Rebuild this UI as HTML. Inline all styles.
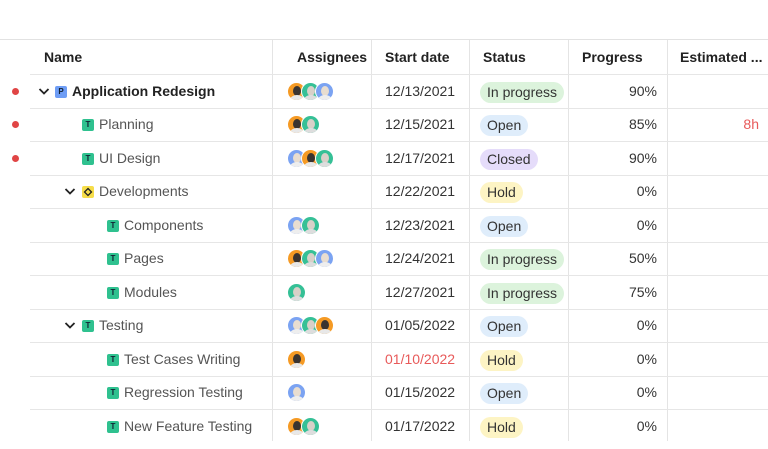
<!DOCTYPE html>
<html><head><meta charset="utf-8"><style>
*{margin:0;padding:0;box-sizing:border-box}
body{width:768px;height:449px;background:#fff;font-family:"Liberation Sans",sans-serif;font-size:14px;color:#333;position:relative;overflow:hidden}
.abs{position:absolute}
.vl{position:absolute;top:40px;height:401px;width:1px;background:#e4e4e4}
.hl{position:absolute;left:30px;right:0;height:1px;background:#e6e6e6}
.hd{position:absolute;top:40px;height:34px;line-height:34px;font-weight:bold;color:#222;font-size:14px}
.row{position:absolute;left:0;width:768px;height:33px}
.txt{position:absolute;top:0;line-height:33px;white-space:nowrap}
.ic{position:absolute;top:11px;width:12px;height:12px;border-radius:2px;font-size:8px;font-weight:bold;color:#123;text-align:center;line-height:12px}
.T{background:#2fc18f}
.P{background:#6e9df5}
.D{background:#f6dd4a}
.chev{position:absolute;top:10px;width:12px;height:12px}
.dot{position:absolute;left:12px;top:13px;width:7px;height:7px;border-radius:50%;background:#e04545}
.av{position:absolute;top:7px;width:19px;height:19px;border-radius:50%;border:1px solid #fff;overflow:hidden}
.av i{position:absolute;left:5px;top:3px;width:8px;height:10px;border-radius:50%}
.av b{position:absolute;left:2px;top:12px;width:14px;height:10px;border-radius:50%}
.o{background:#f59a24}.o i{background:#3a3430}.o b{background:#e8e8e8}
.g{background:#35c096}.g i{background:#d8d0c8}.g b{background:#ddd}
.bl{background:#7ba3f2}.bl i{background:#e8ddd0}.bl b{background:#eee}
.pill{position:absolute;left:480px;top:7px;height:21px;line-height:21px;padding:0 7px;border-radius:11px;font-size:14px;color:#333}
.ip{background:#dcf3dc}.op{background:#dfedfb}.cl{background:#e5dcfa}.ho{background:#fdf4c4}
.date{left:385px}
.pr{right:111px;text-align:right}
</style></head><body>
<div class="abs" style="left:0;right:0;top:39px;height:1px;background:#e2e2e2"></div>
<div class="vl" style="left:272px"></div>
<div class="vl" style="left:371px"></div>
<div class="vl" style="left:469px"></div>
<div class="vl" style="left:568px"></div>
<div class="vl" style="left:667px"></div>
<div class="hd" style="left:44px">Name</div>
<div class="hd" style="left:297px">Assignees</div>
<div class="hd" style="left:385px">Start date</div>
<div class="hd" style="left:483px">Status</div>
<div class="hd" style="left:582px">Progress</div>
<div class="hd" style="left:680px">Estimated ...</div>
<div class="hl" style="top:74px"></div>
<div class="hl" style="top:108px"></div>
<div class="hl" style="top:141px"></div>
<div class="hl" style="top:175px"></div>
<div class="hl" style="top:208px"></div>
<div class="hl" style="top:242px"></div>
<div class="hl" style="top:275px"></div>
<div class="hl" style="top:309px"></div>
<div class="hl" style="top:342px"></div>
<div class="hl" style="top:376px"></div>
<div class="hl" style="top:409px"></div>

<!-- row1 -->
<div class="row" style="top:75px">
<div class="dot"></div>
<svg class="chev" style="left:38px" viewBox="0 0 12 12"><path d="M1.5 4l4.5 4.5 4.5-4.5" fill="none" stroke="#222" stroke-width="1.8"/></svg>
<div class="ic P" style="left:55px">P</div>
<div class="txt" style="left:72px;font-weight:bold;color:#222">Application Redesign</div>
<div class="av o" style="left:287px"><i></i><b></b></div><div class="av g" style="left:301px"><i></i><b></b></div><div class="av bl" style="left:315px"><i></i><b></b></div>
<div class="txt date">12/13/2021</div>
<div class="pill ip">In progress</div>
<div class="txt pr">90%</div>
</div>
<!-- row2 -->
<div class="row" style="top:108px">
<div class="dot"></div>
<div class="ic T" style="left:82px">T</div>
<div class="txt" style="left:99px;color:#555">Planning</div>
<div class="av o" style="left:287px"><i></i><b></b></div><div class="av g" style="left:301px"><i></i><b></b></div>
<div class="txt date">12/15/2021</div>
<div class="pill op">Open</div>
<div class="txt pr">85%</div>
<div class="txt" style="right:9px;color:#e85a5a">8h</div>
</div>
<!-- row3 -->
<div class="row" style="top:142px">
<div class="dot"></div>
<div class="ic T" style="left:82px">T</div>
<div class="txt" style="left:99px;color:#555">UI Design</div>
<div class="av bl" style="left:287px"><i></i><b></b></div><div class="av o" style="left:301px"><i></i><b></b></div><div class="av g" style="left:315px"><i></i><b></b></div>
<div class="txt date">12/17/2021</div>
<div class="pill cl">Closed</div>
<div class="txt pr">90%</div>
</div>
<!-- row4 -->
<div class="row" style="top:175px">
<svg class="chev" style="left:64px" viewBox="0 0 12 12"><path d="M1.5 4l4.5 4.5 4.5-4.5" fill="none" stroke="#222" stroke-width="1.8"/></svg>
<div class="ic D" style="left:82px"><svg width="12" height="12" viewBox="0 0 12 12"><path d="M6 2.5L9.5 6 6 9.5 2.5 6z" fill="none" stroke="#222" stroke-width="1.3"/></svg></div>
<div class="txt" style="left:99px;color:#555">Developments</div>
<div class="txt date">12/22/2021</div>
<div class="pill ho">Hold</div>
<div class="txt pr">0%</div>
</div>
<!-- row5 -->
<div class="row" style="top:209px">
<div class="ic T" style="left:107px">T</div>
<div class="txt" style="left:124px;color:#555">Components</div>
<div class="av bl" style="left:287px"><i></i><b></b></div><div class="av g" style="left:301px"><i></i><b></b></div>
<div class="txt date">12/23/2021</div>
<div class="pill op">Open</div>
<div class="txt pr">0%</div>
</div>
<!-- row6 -->
<div class="row" style="top:242px">
<div class="ic T" style="left:107px">T</div>
<div class="txt" style="left:124px;color:#555">Pages</div>
<div class="av o" style="left:287px"><i></i><b></b></div><div class="av g" style="left:301px"><i></i><b></b></div><div class="av bl" style="left:315px"><i></i><b></b></div>
<div class="txt date">12/24/2021</div>
<div class="pill ip">In progress</div>
<div class="txt pr">50%</div>
</div>
<!-- row7 -->
<div class="row" style="top:276px">
<div class="ic T" style="left:107px">T</div>
<div class="txt" style="left:124px;color:#555">Modules</div>
<div class="av g" style="left:287px"><i></i><b></b></div>
<div class="txt date">12/27/2021</div>
<div class="pill ip">In progress</div>
<div class="txt pr">75%</div>
</div>
<!-- row8 -->
<div class="row" style="top:309px">
<svg class="chev" style="left:64px" viewBox="0 0 12 12"><path d="M1.5 4l4.5 4.5 4.5-4.5" fill="none" stroke="#222" stroke-width="1.8"/></svg>
<div class="ic T" style="left:82px">T</div>
<div class="txt" style="left:99px;color:#555">Testing</div>
<div class="av bl" style="left:287px"><i></i><b></b></div><div class="av g" style="left:301px"><i></i><b></b></div><div class="av o" style="left:315px"><i></i><b></b></div>
<div class="txt date">01/05/2022</div>
<div class="pill op">Open</div>
<div class="txt pr">0%</div>
</div>
<!-- row9 -->
<div class="row" style="top:343px">
<div class="ic T" style="left:107px">T</div>
<div class="txt" style="left:124px;color:#555">Test Cases Writing</div>
<div class="av o" style="left:287px"><i></i><b></b></div>
<div class="txt date" style="color:#e85a5a">01/10/2022</div>
<div class="pill ho">Hold</div>
<div class="txt pr">0%</div>
</div>
<!-- row10 -->
<div class="row" style="top:376px">
<div class="ic T" style="left:107px">T</div>
<div class="txt" style="left:124px;color:#555">Regression Testing</div>
<div class="av bl" style="left:287px"><i></i><b></b></div>
<div class="txt date">01/15/2022</div>
<div class="pill op">Open</div>
<div class="txt pr">0%</div>
</div>
<!-- row11 -->
<div class="row" style="top:410px">
<div class="ic T" style="left:107px">T</div>
<div class="txt" style="left:124px;color:#555">New Feature Testing</div>
<div class="av o" style="left:287px"><i></i><b></b></div><div class="av g" style="left:301px"><i></i><b></b></div>
<div class="txt date">01/17/2022</div>
<div class="pill ho">Hold</div>
<div class="txt pr">0%</div>
</div>
</body></html>
